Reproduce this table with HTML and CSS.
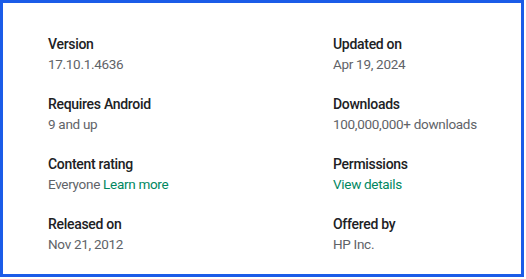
FILE: index.html
```html
<!DOCTYPE html>
<html lang="en">
<head>
    <meta charset="UTF-8">
    <meta name="viewport" content="width=device-width, initial-scale=1.0">
    <title>About this app</title>
    <link rel="stylesheet" href="styles.css">
</head>
<body>
    <div class="info-card">
        <div class="info-grid">
            <div class="info-item">
                <div class="info-label">Version</div>
                <div class="info-value">17.10.1.4636</div>
            </div>
            <div class="info-item">
                <div class="info-label">Updated on</div>
                <div class="info-value">Apr 19, 2024</div>
            </div>
            <div class="info-item">
                <div class="info-label">Requires Android</div>
                <div class="info-value">9 and up</div>
            </div>
            <div class="info-item">
                <div class="info-label">Downloads</div>
                <div class="info-value">100,000,000+ downloads</div>
            </div>
            <div class="info-item">
                <div class="info-label">Content rating</div>
                <div class="info-value">Everyone <a href="#" class="link">Learn more</a></div>
            </div>
            <div class="info-item">
                <div class="info-label">Permissions</div>
                <div class="info-value"><a href="#" class="link">View details</a></div>
            </div>
            <div class="info-item">
                <div class="info-label">Released on</div>
                <div class="info-value">Nov 21, 2012</div>
            </div>
            <div class="info-item">
                <div class="info-label">Offered by</div>
                <div class="info-value">HP Inc.</div>
            </div>
        </div>
    </div>
</body>
</html>
```

FILE: styles.css
```css
:root {
    --label-color: #202124;
    --value-color: #5f6368;
    --link-color: #01875f;
    --frame-color: #1b5ce8;
}

* {
    box-sizing: border-box;
    margin: 0;
    padding: 0;
}

body {
    font-family: Roboto, Arial, sans-serif;
    background-color: #ffffff;
    font-size: 14px;
}

.info-card {
    width: 524px;
    height: 277px;
    border: 3px solid var(--frame-color);
    padding: 31px 0 20px 45px;
}

.info-grid {
    display: grid;
    grid-template-columns: 285px 1fr;
    row-gap: 20px;
}

.info-label {
    color: var(--label-color);
    font-weight: 500;
    line-height: 20px;
    letter-spacing: -0.3px;
}

.info-value {
    color: var(--value-color);
    font-size: 13.5px;
    line-height: 20px;
    letter-spacing: -0.3px;
}

.link {
    color: var(--link-color);
    text-decoration: none;
}
```
